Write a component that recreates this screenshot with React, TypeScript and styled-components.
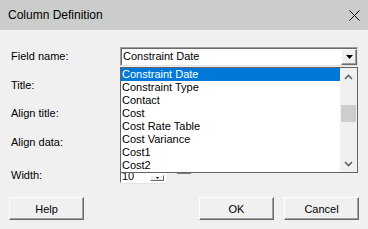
import React from 'react'
import styled, { createGlobalStyle } from 'styled-components'

const fieldNames = [
  'Constraint Date',
  'Constraint Type',
  'Contact',
  'Cost',
  'Cost Rate Table',
  'Cost Variance',
  'Cost1',
  'Cost2',
]

const App = () => {
  return (
    <>
      <GlobalStyle />
      <Dialog>
        <TitleBar>
          <Title>Column Definition</Title>
          <svg width="11" height="11" viewBox="0 0 11 11">
            <path d="M0.5 0.5 L10.5 10.5 M10.5 0.5 L0.5 10.5" stroke="#000" strokeWidth="1" />
          </svg>
        </TitleBar>
        <Form>
          <Label>Field name:</Label>
          <ComboBox>
            <ComboText>Constraint Date</ComboText>
            <DropButton>
              <svg width="7" height="4" viewBox="0 0 7 4">
                <polygon points="0,0 7,0 3.5,4" fill="#000" />
              </svg>
            </DropButton>
            <DropList>
              <Items>
                {fieldNames.map((name, i) => (
                  <Item key={name} selected={i === 0}>{name}</Item>
                ))}
              </Items>
              <ScrollBar>
                <ScrollButton>
                  <svg width="9" height="6" viewBox="0 0 9 6">
                    <polyline points="1,5 4.5,1.5 8,5" fill="none" stroke="#606060" strokeWidth="1.6" />
                  </svg>
                </ScrollButton>
                <Track>
                  <Thumb />
                </Track>
                <ScrollButton>
                  <svg width="9" height="6" viewBox="0 0 9 6">
                    <polyline points="1,1 4.5,4.5 8,1" fill="none" stroke="#606060" strokeWidth="1.6" />
                  </svg>
                </ScrollButton>
              </ScrollBar>
            </DropList>
          </ComboBox>

          <Label>Title:</Label>
          <TextBox />

          <Label>Align title:</Label>
          <TextBox />

          <Label>Align data:</Label>
          <TextBox />

          <Label bottom>Width:</Label>
          <WidthRow>
            <SmallCombo>
              <span>10</span>
              <SmallButton>
                <svg width="3" height="2" viewBox="0 0 3 2">
                  <polygon points="0,0 3,0 1.5,2" fill="#000" />
                </svg>
              </SmallButton>
            </SmallCombo>
            <CheckBox />
          </WidthRow>
        </Form>
        <ButtonRow>
          <PushButton>Help</PushButton>
          <RightButtons>
            <PushButton>OK</PushButton>
            <PushButton>Cancel</PushButton>
          </RightButtons>
        </ButtonRow>
      </Dialog>
    </>
  )
}

export default App

const GlobalStyle = createGlobalStyle`
  html, body {
    margin: 0;
    padding: 0;
    background: #f0f0f0;
  }
  body {
    font-family: "Liberation Sans", Arial, sans-serif;
    font-size: 11px;
    color: #000;
  }
`

const Dialog = styled.div`
  width: 368px;
  height: 229px;
  background: #f0f0f0;
  display: flex;
  flex-direction: column;
  overflow: hidden;
`

const TitleBar = styled.div`
  height: 30px;
  flex: none;
  background: #cbcdca;
  display: flex;
  align-items: center;
  justify-content: space-between;
  padding: 0 8px 0 8px;
  box-sizing: border-box;
`

const Title = styled.span`
  font-size: 12px;
  line-height: 14px;
`

const Form = styled.div`
  display: grid;
  grid-template-columns: 109px 238px;
  grid-template-rows: 19px 19px 19px 19px 22px;
  row-gap: 9.5px;
  padding: 17px 0 0 11px;
`

const Label = styled.div<{ bottom?: boolean }>`
  display: flex;
  align-items: ${({ bottom }) => (bottom ? 'flex-end' : 'center')};
  line-height: 15px;
  white-space: nowrap;
`

const ComboBox = styled.div`
  position: relative;
  display: flex;
  align-items: center;
  background: #fff;
  border: 1px solid;
  border-color: #a0a0a0 #e3e3e3 #e3e3e3 #a0a0a0;
  box-shadow: inset 1px 1px 0 #696969;
  box-sizing: border-box;
  height: 19px;
`

const ComboText = styled.span`
  flex: 1;
  padding-left: 2px;
  line-height: 13px;
`

const DropButton = styled.div`
  width: 16px;
  height: 16px;
  box-sizing: border-box;
  background: #f0f0f0;
  border-top: 1px solid #fff;
  border-left: 1px solid #fff;
  border-right: 1px solid #696969;
  border-bottom: 1px solid #696969;
  box-shadow: inset -1px -1px 0 #a0a0a0;
  display: flex;
  align-items: center;
  justify-content: center;
  padding-top: 1px;
`

const DropList = styled.div`
  position: absolute;
  top: 19px;
  left: -1px;
  width: 238px;
  height: 106px;
  box-sizing: border-box;
  background: #fff;
  border: 1px solid #646464;
  display: flex;
  z-index: 2;
`

const Items = styled.div`
  flex: 1;
  display: flex;
  flex-direction: column;
`

const Item = styled.div<{ selected?: boolean }>`
  height: 13px;
  line-height: 13px;
  padding-left: 1px;
  white-space: nowrap;
  background: ${({ selected }) => (selected ? '#0078d7' : 'transparent')};
  color: ${({ selected }) => (selected ? '#fff' : '#000')};
`

const ScrollBar = styled.div`
  width: 17px;
  background: #f0f0f0;
  display: flex;
  flex-direction: column;
`

const ScrollButton = styled.div`
  height: 17px;
  flex: none;
  display: flex;
  align-items: center;
  justify-content: center;
`

const Track = styled.div`
  flex: 1;
  padding: 20px 1px 0 1px;
`

const Thumb = styled.div`
  height: 17px;
  background: #cdcdcd;
`

const TextBox = styled.div`
  background: #fff;
  border: 1px solid #a0a0a0;
  height: 19px;
  box-sizing: border-box;
`

const WidthRow = styled.div`
  display: flex;
  align-items: flex-start;
  gap: 11px;
`

const SmallCombo = styled.div`
  margin-top: 7px;
  width: 46px;
  height: 15px;
  box-sizing: border-box;
  background: #fff;
  border: 1px solid;
  border-color: #696969 #fff #fff #696969;
  box-shadow: 0 1px 0 #e3e3e3;
  display: flex;
  align-items: center;
  justify-content: space-between;
  padding: 0 1px 0 1px;
  line-height: 12px;
`

const SmallButton = styled.div`
  align-self: flex-end;
  margin-bottom: 1px;
  width: 14px;
  height: 6px;
  box-sizing: border-box;
  background: #f0f0f0;
  border-top: 1px solid #fff;
  border-left: 1px solid #fff;
  border-right: 1px solid #696969;
  border-bottom: 1px solid #696969;
  display: flex;
  align-items: center;
  justify-content: center;
`

const CheckBox = styled.div`
  width: 14px;
  height: 13px;
  box-sizing: border-box;
  border: 1px solid #808080;
  background: #e8e8e8;
`

const ButtonRow = styled.div`
  display: flex;
  justify-content: space-between;
  padding: 14px 9px 0 9px;
`

const RightButtons = styled.div`
  display: flex;
  gap: 10px;
`

const PushButton = styled.button`
  width: 75px;
  height: 23px;
  box-sizing: border-box;
  padding: 0;
  font-family: "Liberation Sans", Arial, sans-serif;
  font-size: 11px;
  color: #000;
  background: #f0f0f0;
  border: 1px solid;
  border-color: #fff #696969 #696969 #fff;
  box-shadow: inset -1px -1px 0 #a0a0a0;
  border-radius: 0;
`
